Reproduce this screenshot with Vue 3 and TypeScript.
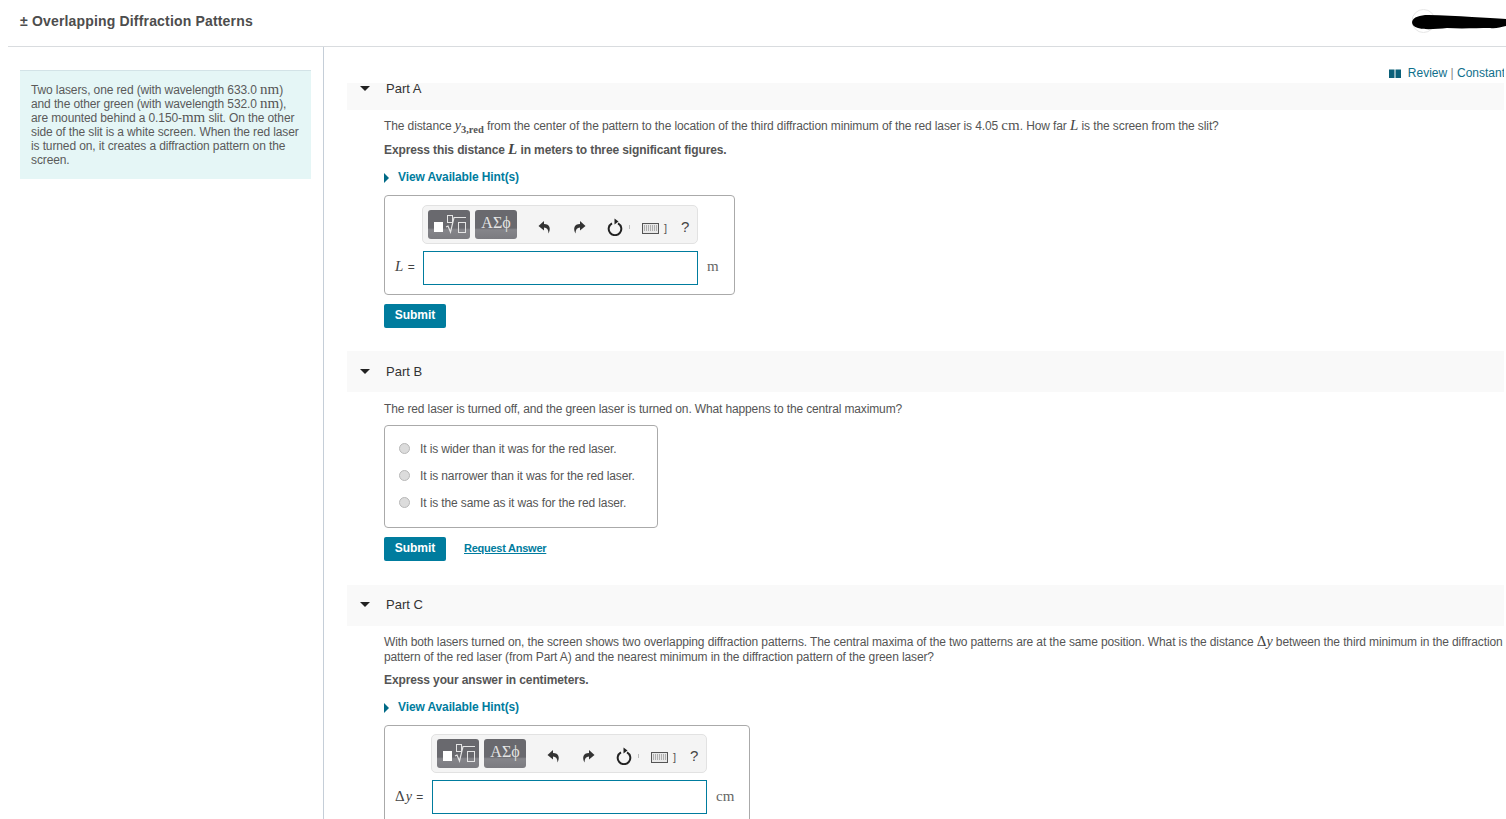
<script setup lang="ts">
const options: string[] = [
  'It is wider than it was for the red laser.',
  'It is narrower than it was for the red laser.',
  'It is the same as it was for the red laser.',
]
</script>

<template>
  <div class="page">
    <header class="top">
      <h1 class="title">± Overlapping Diffraction Patterns</h1>
      <div class="account">
        <svg class="blob" width="94" height="24" viewBox="0 0 94 24">
          <circle cx="11.500" cy="12" r="11.500" fill="#fff" stroke="#e6e6e6" />
          <path d="M0 13C1 8 8 6 16 6C30 6 45 7 60 8C72 9 85 9 94 10V17C88 18 84 20 78 19C65 19 50 20 35 19C25 20 12 21 6 19C2 18 0 16 0 13Z" fill="#000" />
        </svg>
      </div>
    </header>

    <div class="body">
      <aside class="side">
        <div class="intro">
          Two lasers, one red (with wavelength 633.0 <span class="unit-m">nm</span>) and the other green (with wavelength 532.0 <span class="unit-m">nm</span>), are mounted behind a 0.150-<span class="unit-m">mm</span> slit. On the other side of the slit is a white screen. When the red laser is turned on, it creates a diffraction pattern on the screen.
        </div>
      </aside>

      <main class="main">
        <div class="review">
          <div class="review-in">
            <svg class="book" width="12" height="9" viewBox="0 0 12 9"><path d="M0 0.500H5.500V9H0ZM6.500 0.500H12V9H6.500Z" fill="#0b6079" /></svg>
            <span class="rlink">Review</span><span class="bar"> | </span><span class="rlink">Constants</span>
          </div>
        </div>

        <section class="part">
          <div class="part-head first"><i class="caret"></i><span>Part A</span></div>
          <div class="content first-c">
            <p class="q wide">The distance <span class="mi">y</span><sub class="msub">3,red</sub> from the center of the pattern to the location of the third diffraction minimum of the red laser is 4.05 <span class="unit-m">cm</span>. How far <span class="mi big">L</span> is the screen from the slit?</p>
            <p class="ask">Express this distance <span class="mi big">L</span> in meters to three significant figures.</p>
            <div class="hint"><i class="tri"></i>View Available Hint(s)</div>
            <div class="answer">
              <div class="toolbar">
                <span class="tb-btn"><svg width="42" height="29" viewBox="0 0 42 29"><rect x="6" y="12" width="9" height="10" fill="#fff" /><rect x="19.500" y="5.500" width="5" height="7" fill="none" stroke="#e4e4e4" /><path d="M18 17L20 16L22.500 22L26 7.500H38" fill="none" stroke="#e4e4e4" stroke-width="1.200" /><rect x="30.500" y="12.500" width="7" height="10" fill="none" stroke="#e4e4e4" /></svg></span>
                <span class="tb-btn greek">ΑΣϕ</span>
                <svg class="ic undo" width="14" height="14" viewBox="0 0 14 14"><path d="M6 1L0.500 6L6 10.500V7.500C9 7.500 10.500 9.500 10.500 13.500C13 9 12 4 6 4Z" fill="#333" /></svg>
                <svg class="ic redo" width="14" height="14" viewBox="0 0 14 14"><path d="M8 1L13.500 6L8 10.500V7.500C5 7.500 3.500 9.500 3.500 13.500C1 9 2 4 8 4Z" fill="#333" /></svg>
                <svg class="ic reset" width="16" height="18" viewBox="0 0 16 18"><path d="M5 5.300A6.300 6.300 0 1 0 11 5.300" fill="none" stroke="#222" stroke-width="2" /><path d="M7.500 0.500V6.500L11.500 3.500Z" fill="#222" /></svg>
                <i class="tick"></i>
                <svg class="ic kb" width="17" height="11" viewBox="0 0 17 11"><rect x="0.500" y="0.500" width="16" height="10" fill="#e8e8e8" stroke="#555" /><path d="M2 3h13M2 5h13M2 7h13" stroke="#777" stroke-dasharray="1 1" /></svg>
                <span class="brk">]</span>
                <span class="help">?</span>
              </div>
              <span class="label"><span class="mi lab">L</span> =</span>
              <div class="field"></div>
              <span class="unit">m</span>
            </div>
            <div class="actions"><span class="submit">Submit</span></div>
          </div>
        </section>

        <section class="part">
          <div class="part-head"><i class="caret"></i><span>Part B</span></div>
          <div class="content part-b">
            <p class="q">The red laser is turned off, and the green laser is turned on. What happens to the central maximum?</p>
            <div class="choices">
              <label v-for="o in options" :key="o" class="choice"><i class="radio"></i>{{ o }}</label>
            </div>
            <div class="actions">
              <span class="submit">Submit</span>
              <span class="request">Request Answer</span>
            </div>
          </div>
        </section>

        <section class="part">
          <div class="part-head head-c"><i class="caret"></i><span>Part C</span></div>
          <div class="content part-c">
            <p class="q mid">With both lasers turned on, the screen shows two overlapping diffraction patterns. The central maxima of the two patterns are at the same position. What is the distance <span class="mi up">Δ</span><span class="mi">y</span> between the third minimum in the diffraction pattern of the red laser (from Part A) and the nearest minimum in the diffraction pattern of the green laser?</p>
            <p class="ask">Express your answer in centimeters.</p>
            <div class="hint"><i class="tri"></i>View Available Hint(s)</div>
            <div class="answer">
              <div class="toolbar">
                <span class="tb-btn"><svg width="42" height="29" viewBox="0 0 42 29"><rect x="6" y="12" width="9" height="10" fill="#fff" /><rect x="19.500" y="5.500" width="5" height="7" fill="none" stroke="#e4e4e4" /><path d="M18 17L20 16L22.500 22L26 7.500H38" fill="none" stroke="#e4e4e4" stroke-width="1.200" /><rect x="30.500" y="12.500" width="7" height="10" fill="none" stroke="#e4e4e4" /></svg></span>
                <span class="tb-btn greek">ΑΣϕ</span>
                <svg class="ic undo" width="14" height="14" viewBox="0 0 14 14"><path d="M6 1L0.500 6L6 10.500V7.500C9 7.500 10.500 9.500 10.500 13.500C13 9 12 4 6 4Z" fill="#333" /></svg>
                <svg class="ic redo" width="14" height="14" viewBox="0 0 14 14"><path d="M8 1L13.500 6L8 10.500V7.500C5 7.500 3.500 9.500 3.500 13.500C1 9 2 4 8 4Z" fill="#333" /></svg>
                <svg class="ic reset" width="16" height="18" viewBox="0 0 16 18"><path d="M5 5.300A6.300 6.300 0 1 0 11 5.300" fill="none" stroke="#222" stroke-width="2" /><path d="M7.500 0.500V6.500L11.500 3.500Z" fill="#222" /></svg>
                <i class="tick"></i>
                <svg class="ic kb" width="17" height="11" viewBox="0 0 17 11"><rect x="0.500" y="0.500" width="16" height="10" fill="#e8e8e8" stroke="#555" /><path d="M2 3h13M2 5h13M2 7h13" stroke="#777" stroke-dasharray="1 1" /></svg>
                <span class="brk">]</span>
                <span class="help">?</span>
              </div>
              <span class="label dy"><span class="mi up">Δ</span><span class="mi">y</span> =</span>
              <div class="field"></div>
              <span class="unit">cm</span>
            </div>
          </div>
        </section>
      </main>
    </div>
  </div>
</template>

<style>
html, body { margin: 0; background: #fff; overflow: hidden; }
</style>

<style scoped>
.page { width: 1506px; height: 819px; overflow: hidden; display: flex; flex-direction: column; font-family: "Liberation Sans", Arial, sans-serif; font-size: 12px; color: #555; letter-spacing: -0.12px; }
.top { height: 46px; margin-left: 8px; border-bottom: 1px solid #d9dcdf; display: flex; justify-content: space-between; align-items: flex-start; flex: none; }
.title { margin: 13px 0 0 12px; font-size: 14px; line-height: 16px; font-weight: 700; color: #4d4d4d; letter-spacing: 0.17px; }
.account { margin-top: 9px; height: 24px; }
.blob { display: block; }
.body { flex: 1; display: flex; min-height: 0; }
.side { width: 324px; flex: none; box-sizing: border-box; border-right: 1px solid #c5ced8; padding: 23px 12px 0 20px; }
.intro { background: #e5f6f6; border-top: 1px solid #d3e3e7; padding: 12px 11px 12px; line-height: 14px; color: #5a5a5a; }
.unit-m { font-family: "Liberation Serif", serif; font-size: 15px; color: #555; line-height: 10px; letter-spacing: 0; }
.main { flex: 1; min-width: 0; overflow: hidden; padding-right: 2px; }
.review { height: 36px; box-sizing: border-box; padding-top: 19px; overflow: hidden; display: flex; justify-content: flex-end; line-height: 14px; }
.review-in { display: flex; align-items: flex-start; white-space: nowrap; margin-right: -7px; letter-spacing: 0; flex: none; }
.book { margin: 3px 7px 0 0; }
.rlink { color: #0f6f8c; }
.bar { color: #888; white-space: pre; }
.part { margin-left: 23px; }
.part-head { height: 41px; box-sizing: border-box; background: #f9f9f9; display: flex; align-items: center; font-size: 13px; color: #333; padding-left: 13px; letter-spacing: 0; }
.part-head.first { height: 27px; align-items: flex-start; line-height: 11px; }
.part-head.head-c { padding-bottom: 2px; }
.caret { width: 0; height: 0; border-left: 5px solid transparent; border-right: 5px solid transparent; border-top: 5px solid #222; margin-right: 16px; }
.part-head.first .caret { margin-top: 3px; }
.content { padding: 9px 0 0 37px; }
.first-c { padding-bottom: 23px; }
.part-b { padding-top: 10px; padding-bottom: 24px; }
.part-b .choices { margin-top: 8px; }
.part-c .ask { margin-top: 8px; }
.part-c .answer { padding-top: 8px; }
.part-c .label { padding-bottom: 0; }
.part-c .unit { padding-bottom: 2px; }
.q { margin: 0; line-height: 15px; letter-spacing: -0.135px; }
.q.wide { letter-spacing: -0.105px; }
.q.mid { letter-spacing: -0.118px; }
.ask { margin: 9px 0 0; line-height: 15px; font-weight: 700; color: #555; }
.mi { font-family: "Liberation Serif", serif; font-style: italic; font-size: 14px; line-height: 10px; color: #444; letter-spacing: 0; }
.mi.big { font-size: 15px; }
.mi.up { font-style: normal; font-size: 15px; }
.msub { font-family: "Liberation Serif", serif; font-weight: 700; font-size: 10.500px; line-height: 8px; vertical-align: -3px; color: #555; letter-spacing: 0; }
.hint { margin-top: 12px; line-height: 15px; color: #007c9e; font-weight: 700; display: flex; align-items: center; }
.tri { width: 0; height: 0; border-top: 5px solid transparent; border-bottom: 5px solid transparent; border-left: 5px solid #006a86; margin-right: 9px; }
.answer { margin-top: 10px; width: fit-content; box-sizing: border-box; border: 1px solid #aaa; border-radius: 4px; padding: 9px 15px 9px 10px; display: grid; grid-template-columns: auto 275px auto; column-gap: 8px; row-gap: 7px; align-items: center; background: #fff; }
.toolbar { grid-column: 2 / 4; width: 276px; box-sizing: border-box; margin-left: -1px; height: 39px; background: #f4f4f4; border: 1px solid #e2e2e2; border-radius: 5px; padding: 4px 0 0 5px; display: flex; align-items: flex-start; letter-spacing: 0; }
.tb-btn { width: 42px; height: 29px; box-sizing: border-box; margin-right: 5px; border-radius: 3px; display: flex; align-items: center; justify-content: center; background: linear-gradient(#69696e 0, #69696e 62%, #85858a 68%, #7b7b80 100%); flex: none; }
.greek { font-family: "Liberation Serif", serif; font-size: 16px; color: #e4e4e4; align-items: flex-start; line-height: 20px; padding-top: 3px; }
.ic { flex: none; display: block; }
.undo { margin: 10px 0 0 16px; }
.redo { margin: 10px 0 0 20px; }
.reset { margin: 8px 0 0 21px; }
.tick { width: 1px; height: 4px; background: #bbb; margin: 15px 0 0 6px; flex: none; }
.kb { margin: 13px 0 0 12px; }
.brk { font-size: 11px; line-height: 13px; margin: 12px 0 0 5px; color: #555; }
.help { font-size: 15px; line-height: 17px; margin: 8px 0 0 14px; color: #444; }
.label { font-size: 12px; color: #444; white-space: nowrap; width: 20px; letter-spacing: 0; padding-bottom: 2px; }
.label.dy { width: 29px; }
.mi.lab { font-size: 15px; margin-right: 1px; }
.dy .mi { margin-right: 1px; }
.field { height: 34px; box-sizing: border-box; border: 1px solid #007c9e; background: #fff; }
.unit { font-family: "Liberation Serif", serif; font-size: 15px; color: #666; margin-left: 1px; letter-spacing: 0; padding-bottom: 4px; }
.actions { margin-top: 9px; display: flex; align-items: center; }
.submit { width: 62px; height: 24px; background: #007c9e; color: #fff; border-radius: 2px; font-weight: 700; line-height: 22px; text-align: center; font-size: 12px; letter-spacing: 0; }
.request { margin-left: 18px; margin-bottom: 2px; color: #007c9e; font-weight: 700; font-size: 11px; text-decoration: underline; letter-spacing: -0.25px; }
.choices { margin-top: 9px; width: 274px; height: 103px; box-sizing: border-box; border: 1px solid #aaa; border-radius: 4px; padding: 9px 0 0 14px; }
.choice { display: flex; align-items: center; height: 27px; color: #555; }
.radio { width: 9px; height: 9px; border: 1px solid #b8b8b8; border-radius: 50%; box-sizing: content-box; margin-right: 10px; background: #dcdcdc; }
</style>
